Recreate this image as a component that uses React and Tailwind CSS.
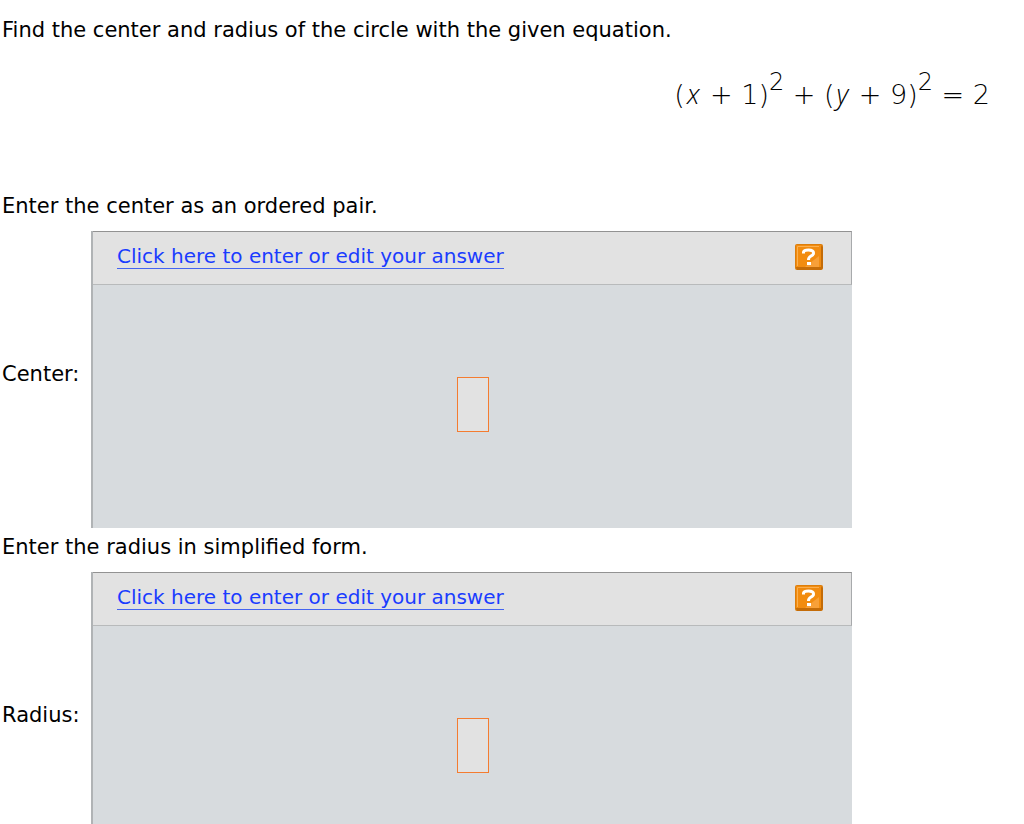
import React from 'react';

/**
 * Orange help button shown at the right end of an answer bar.
 *
 * @param {object} props - Component props
 * @param {string} props.label - Accessible name of the button.
 */
const HelpButton = ({ label }) => {
  return (
    <button type="button" aria-label={label} className="block cursor-pointer">
      <svg className="w-7 h-7" viewBox="0 0 28 28" aria-hidden="true">
        <rect x="0" y="0" width="28" height="26" rx="2" fill="#dc7e0c" />
        <path d="M1 23h25V2l2 1v21l-2 2H2z" fill="#c46c08" />
        <rect x="1" y="1" width="25" height="22" fill="#f28c10" />
        <path d="M2.500 22V2.500H24" fill="none" stroke="#fbb050" strokeWidth="1" />
        <path d="M10 23L24 12V23z" fill="#f8a038" />
        <path
          d="M8.500 9.500V8Q9 6 13.500 6Q18.500 6 18.500 9Q18.500 11 16 12Q13.500 13.200 13.500 16"
          fill="none"
          stroke="#fff"
          strokeWidth="3"
        />
        <rect x="12" y="18" width="4" height="3" fill="#fff" />
      </svg>
    </button>
  );
};

// Variable name in the equation, set in a light italic
const Variable = ({ children }) => (
  <i className="px-0.5 font-['Open_Sans',sans-serif] font-light">{children}</i>
);

// Exponent in the equation
const Power = ({ children }) => (
  <sup className="-top-3.5 text-2xl leading-none">{children}</sup>
);

/**
 * One labelled answer panel: a bar with the edit link, and the answer area.
 */
const AnswerPanel = ({ id, label }) => {
  return (
    <div className="flex items-center max-w-[852px]">
      <label htmlFor={id} className="w-[91px] shrink-0 pl-0.5 pb-3">
        {label}:
      </label>

      <div className="flex-1 border-l-2 border-l-[#b0b3b5] bg-[#d7dbde]">
        {/* Answer bar */}
        <div className="
          flex items-center justify-between
          h-[54px] pl-6 pr-7
          border-t border-r border-b border-t-[#929292] border-r-[#a8aaac] border-b-[#b8babb]
          bg-[#e2e2e2]
        ">
          <a href={`#${id}`} className="mb-1 border-b border-b-[#4464f0] text-xl leading-6 text-[#1a3cff]">
            Click here to enter or edit your answer
          </a>
          <HelpButton label={`Help with ${label.toLowerCase()}`} />
        </div>

        {/* Answer area */}
        <div className="flex items-center justify-center h-[243px] pb-1">
          <input
            id={id}
            type="text"
            className="w-8 h-[55px] border border-[#f47c30] bg-[#e2e2e2] text-center outline-none"
          />
        </div>
      </div>
    </div>
  );
};

const App = () => {
  return (
    <main className="
      h-screen overflow-hidden
      bg-white text-black
      font-['DejaVu_Sans',sans-serif] text-[21px] leading-[38px]
    ">
      <p className="pt-[11px] pl-0.5">Find the center and radius of the circle with the given equation.</p>

      {/* Equation */}
      <p className="pt-[26px] pr-[34px] pb-[73px] text-right text-[27px] font-extralight">
        (<Variable>x</Variable> + 1)<Power>2</Power> + (<Variable>y</Variable> + 9)
        <Power>2</Power> = 2
      </p>

      <p className="pl-0.5 pb-1.5">Enter the center as an ordered pair.</p>
      <AnswerPanel id="center" label="Center" />

      <p className="pl-0.5 pb-1.5">Enter the radius in simplified form.</p>
      <AnswerPanel id="radius" label="Radius" />
    </main>
  );
};

export default App;
